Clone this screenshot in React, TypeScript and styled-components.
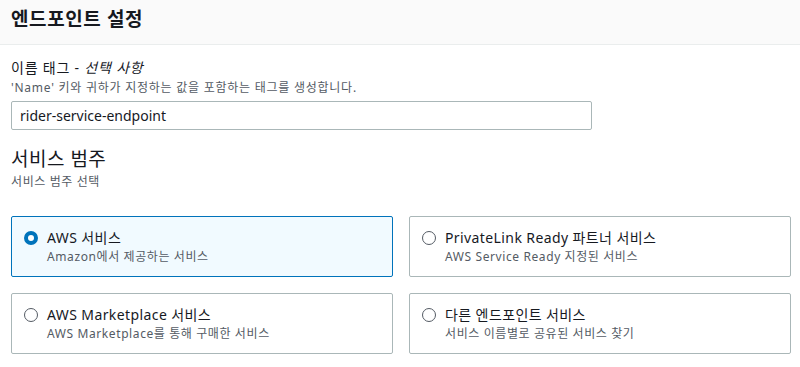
import React from 'react'
import styled, {createGlobalStyle} from 'styled-components'

const serviceOptions = [
  {title: 'AWS 서비스', desc: 'Amazon에서 제공하는 서비스', selected: true},
  {title: 'PrivateLink Ready 파트너 서비스', desc: 'AWS Service Ready 지정된 서비스', selected: false},
  {title: 'AWS Marketplace 서비스', desc: 'AWS Marketplace를 통해 구매한 서비스', selected: false},
  {title: '다른 엔드포인트 서비스', desc: '서비스 이름별로 공유된 서비스 찾기', selected: false},
]

const GlobalStyle = createGlobalStyle`
  body {
    margin: 0;
    background: #fff;
    font-family: "Noto Sans", "Noto Sans CJK KR", sans-serif;
    color: #16191f;
  }
`

export default function App() {
  return (
    <>
      <GlobalStyle/>
      <Panel>
        <Header>
          <Title>엔드포인트 설정</Title>
        </Header>
        <Body>
          <Field>
            <Label>이름 태그 - <em>선택 사항</em></Label>
            <Hint>'Name' 키와 귀하가 지정하는 값을 포함하는 태그를 생성합니다.</Hint>
            <TextInput defaultValue="rider-service-endpoint"/>
          </Field>
          <Section>
            <SectionTitle>서비스 범주</SectionTitle>
            <SectionHint>서비스 범주 선택</SectionHint>
          </Section>
          <Tiles>
            {serviceOptions.map((opt, i) => (
              <Tile key={i} $selected={opt.selected}>
                <Radio $selected={opt.selected}/>
                <TileText>
                  <TileTitle>{opt.title}</TileTitle>
                  <TileDesc>{opt.desc}</TileDesc>
                </TileText>
              </Tile>
            ))}
          </Tiles>
        </Body>
      </Panel>
    </>
  )
}

const Panel = styled.div`
  width: 800px;
  height: 367px;
  overflow: hidden;
`

const Header = styled.div`
  height: 45px;
  background: #fafafa;
  border-bottom: 1px solid #eaeded;
  padding: 0 11px;
  display: flex;
  align-items: center;
  box-sizing: border-box;
`

const Title = styled.h2`
  margin: 0 0 9px;
  font-size: 19px;
  letter-spacing: 0.6px;
  font-weight: 700;
  color: #16191f;
`

const Body = styled.div`
  padding: 12px 9px 0 11px;
`

const Field = styled.div`
  display: flex;
  flex-direction: column;
`

const Label = styled.div`
  font-size: 14px;
  letter-spacing: 0.8px;
  line-height: 22px;
  color: #16191f;
  em {
    font-style: italic;
  }
`

const Hint = styled.div`
  font-size: 12px;
  letter-spacing: 0.75px;
  line-height: 16px;
  color: #545b64;
  margin-top: 1px;
`

const TextInput = styled.input`
  margin-top: 5px;
  width: 581px;
  height: 29px;
  box-sizing: border-box;
  border: 1px solid #aab7b8;
  border-radius: 2px;
  padding: 0 8px;
  font-family: "Noto Sans", "Noto Sans CJK KR", sans-serif;
  font-size: 14px;
  color: #16191f;
  outline: none;
`

const Section = styled.div`
  margin-top: 17px;
`

const SectionTitle = styled.div`
  font-size: 19px;
  letter-spacing: 0.5px;
  line-height: 24px;
  color: #16191f;
`

const SectionHint = styled.div`
  font-size: 12px;
  letter-spacing: 0.6px;
  line-height: 18px;
  color: #545b64;
  margin-top: 2px;
`

const Tiles = styled.div`
  margin-top: 25px;
  display: grid;
  grid-template-columns: 382px 382px;
  column-gap: 16px;
  row-gap: 16px;
`

const Tile = styled.div<{$selected: boolean}>`
  height: 61px;
  box-sizing: border-box;
  border: 1px solid ${p => (p.$selected ? '#0073bb' : '#aab7b8')};
  background: ${p => (p.$selected ? '#f1faff' : '#fff')};
  border-radius: 2px;
  padding: 11px 12px;
  display: flex;
  align-items: flex-start;
  gap: 9px;
`

const Radio = styled.span<{$selected: boolean}>`
  flex: none;
  margin-top: 3px;
  width: 14px;
  height: 14px;
  box-sizing: border-box;
  border-radius: 50%;
  border: ${p => (p.$selected ? '4px solid #0073bb' : '1px solid #545b64')};
  background: #fff;
`

const TileText = styled.div`
  display: flex;
  flex-direction: column;
`

const TileTitle = styled.div`
  font-size: 14px;
  letter-spacing: 0.4px;
  line-height: 20px;
  color: #16191f;
`

const TileDesc = styled.div`
  font-size: 12px;
  letter-spacing: 0.6px;
  line-height: 18px;
  color: #545b64;
`
